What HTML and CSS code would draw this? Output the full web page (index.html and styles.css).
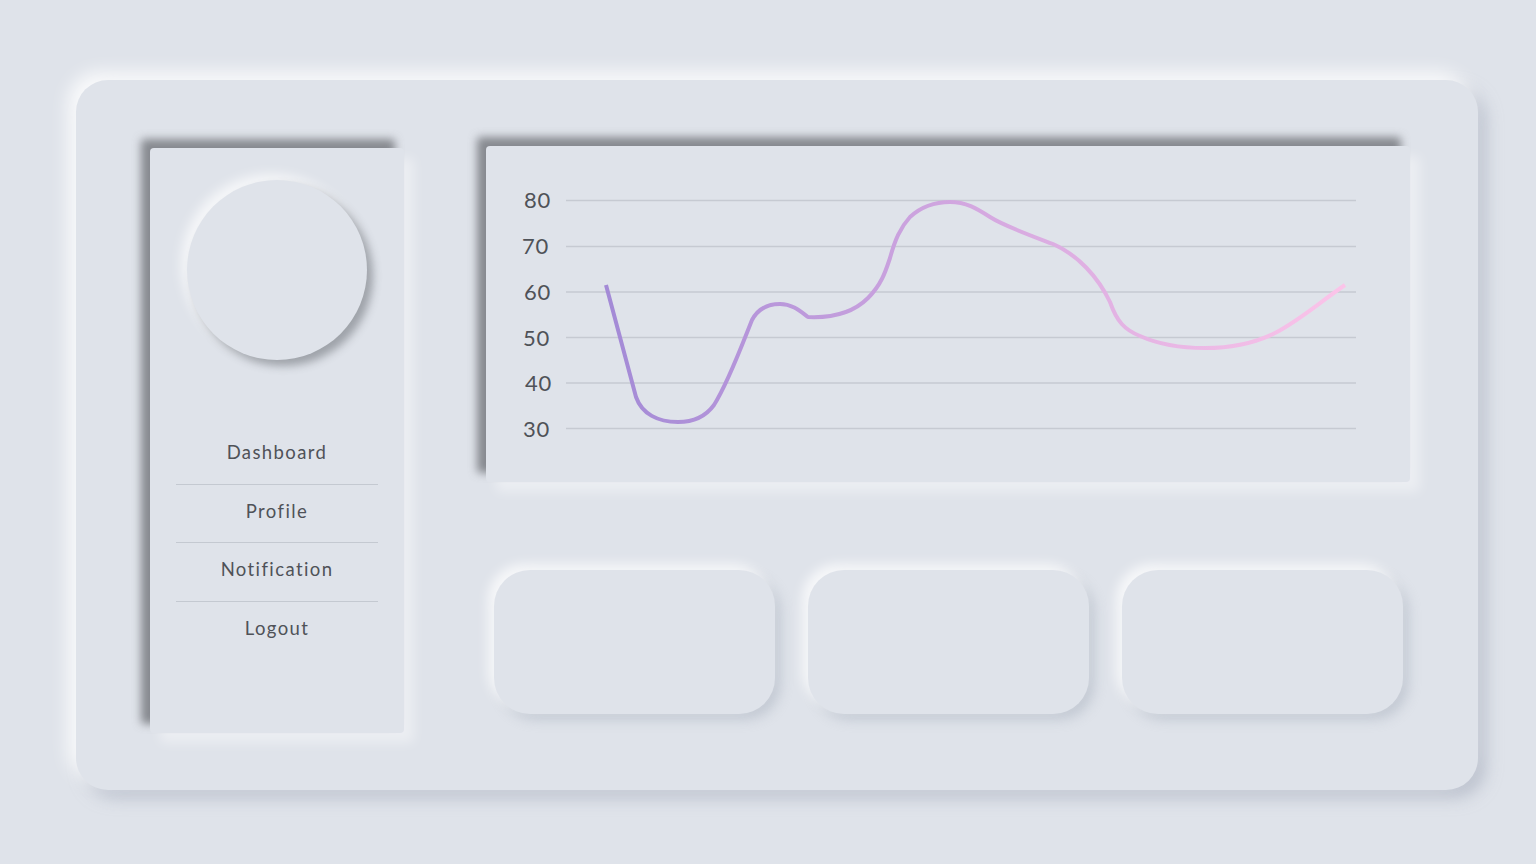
FILE: index.html
```html
<!DOCTYPE html>
<html lang="en">
<head>
<meta charset="utf-8">
<title>Dashboard</title>
<link rel="stylesheet" href="styles.css">
</head>
<body>
<main class="shell">
  <aside class="sidebar">
    <div class="avatar"></div>
    <nav class="menu">
      <a class="menu-item">Dashboard</a>
      <a class="menu-item">Profile</a>
      <a class="menu-item">Notification</a>
      <a class="menu-item">Logout</a>
    </nav>
  </aside>
  <section class="content">
    <div class="chart">
      <svg class="chart-svg" width="924" height="336" viewBox="486 146 924 336">
        <defs>
          <linearGradient id="lineGrad" x1="606" y1="0" x2="1345" y2="0" gradientUnits="userSpaceOnUse">
            <stop offset="0" stop-color="#a38ad6"/>
            <stop offset="0.5" stop-color="#d4a8e0"/>
            <stop offset="1" stop-color="#fbc4e9"/>
          </linearGradient>
        </defs>
        <g class="grid">
          <line x1="566" y1="200.5" x2="1356" y2="200.5"/>
          <line x1="566" y1="246.5" x2="1356" y2="246.5"/>
          <line x1="566" y1="292" x2="1356" y2="292"/>
          <line x1="566" y1="337.5" x2="1356" y2="337.5"/>
          <line x1="566" y1="383" x2="1356" y2="383"/>
          <line x1="566" y1="428.5" x2="1356" y2="428.5"/>
        </g>
        <g class="labels">
          <text x="551" y="208">80</text>
          <text x="549" y="254">70</text>
          <text x="551" y="300">60</text>
          <text x="550" y="346">50</text>
          <text x="552" y="391">40</text>
          <text x="550" y="437">30</text>
        </g>
        <path class="curve" stroke="url(#lineGrad)" d="M606,285 L636,397 C642,414 658,422 678,422 C695,422 706,416 714,405 C728,383 742,345 752,320 C759,307 770,304 780,304 C792,304 800,311 808,317 C830,318 852,314 868,298 C882,284 886,270 890,258 C895,240 900,228 910,217 C922,206 936,202 950,202 C966,202 976,208 990,217 C1004,226 1032,236 1053,244 C1078,255 1098,277 1110,302 C1117,322 1125,330 1140,336 C1160,345 1180,348 1205,348 C1230,348 1255,343 1275,333 C1300,320 1320,302 1345,285"/>
      </svg>
    </div>
    <div class="tiles">
      <div class="tile"></div>
      <div class="tile"></div>
      <div class="tile"></div>
    </div>
  </section>
</main>
</body>
</html>
```

FILE: styles.css
```css
* { box-sizing: border-box; }

html, body {
  margin: 0;
  padding: 0;
  background: #dfe3ea;
  width: 1536px;
  height: 864px;
  overflow: hidden;
  font-family: Lato, "Open Sans", "Liberation Sans", sans-serif;
}

body {
  padding: 80px 0 0 76px;
}

.shell {
  width: 1402px;
  height: 710px;
  border-radius: 32px;
  background: #dfe3ea;
  box-shadow: -8px -8px 18px rgba(255, 255, 255, 0.85), 8px 8px 16px rgba(160, 168, 184, 0.55);
  display: flex;
  align-items: flex-start;
  padding: 0 0 0 74px;
  gap: 82px;
}

.sidebar {
  width: 254px;
  height: 585px;
  margin-top: 68px;
  border-radius: 4px;
  background: #dfe3ea;
  box-shadow: -9px -9px 8px rgba(105, 108, 114, 0.75), 10px 10px 12px rgba(255, 255, 255, 0.4);
  display: flex;
  flex-direction: column;
  align-items: center;
  padding-top: 32px;
}

.avatar {
  width: 180px;
  height: 180px;
  flex-shrink: 0;
  border-radius: 50%;
  background: #dfe3ea;
  box-shadow: 6px 6px 9px rgba(80, 84, 92, 0.45), -6px -6px 12px rgba(255, 255, 255, 0.7);
}

.menu {
  margin-top: 66px;
  width: 202px;
  display: flex;
  flex-direction: column;
}

.menu-item {
  display: flex;
  align-items: center;
  justify-content: center;
  height: 58.5px;
  padding-bottom: 5px;
  font-size: 18.5px;
  letter-spacing: 1.4px;
  color: #4f5258;
  border-bottom: 1px solid #c4c9d1;
}

.menu-item:last-child {
  border-bottom: none;
}

.content {
  display: flex;
  flex-direction: column;
}

.chart {
  width: 924px;
  height: 336px;
  margin-top: 66px;
  border-radius: 4px;
  background: #dfe3ea;
  box-shadow: -9px -9px 8px rgba(105, 108, 114, 0.75), 10px 10px 12px rgba(255, 255, 255, 0.4);
}

.chart-svg {
  display: block;
}

.grid line {
  stroke: #c6cad2;
  stroke-width: 1.3;
}

.labels text {
  font-family: Lato, "Open Sans", "Liberation Sans", sans-serif;
  font-size: 22px;
  fill: #4f5258;
  text-anchor: end;
  letter-spacing: 0.8px;
}

.curve {
  fill: none;
  stroke-width: 4;
  stroke-linecap: butt;
  stroke-linejoin: round;
}

.tiles {
  display: flex;
  gap: 33px;
  margin-top: 88px;
  padding-left: 8px;
}

.tile {
  width: 281px;
  height: 144px;
  border-radius: 36px;
  background: #dfe3ea;
  box-shadow: -6px -6px 12px rgba(255, 255, 255, 0.75), 6px 6px 12px rgba(165, 172, 186, 0.45);
}
```
